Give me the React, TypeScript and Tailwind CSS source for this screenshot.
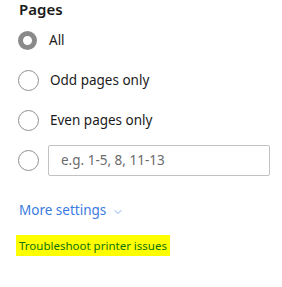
import { ChevronDown } from 'lucide-react';

const font = { fontFamily: '"Segoe UI", "Noto Sans", "Open Sans", sans-serif' };

function Radio({ checked }: { checked?: boolean }) {
  return checked ? (
    <span className="w-[19px] h-[19px] rounded-full border-[5px] border-[#8a8a8a] bg-white shrink-0" />
  ) : (
    <span className="w-[21px] h-[21px] rounded-full border border-[#8f8f8f] bg-white shrink-0" />
  );
}

export default function App() {
  const options = ['All', 'Odd pages only', 'Even pages only'];
  return (
    <div className="w-[282px] h-[287px] bg-white text-[#1b1b1b]" style={font}>
      <div className="pl-[19px] pr-[12px]">
        <div className="text-[15px] font-semibold leading-[18px]">Pages</div>
        <div className="mt-[2px]">
          {options.map((o, i) => (
            <div key={o} className="h-[40px] flex items-center gap-[11px] -ml-[1px]">
              <Radio checked={i === 0} />
              <span className={`text-[13.5px] ${i === 0 ? 'ml-[1px]' : ''}`}>{o}</span>
            </div>
          ))}
          <div className="h-[40px] flex items-center gap-[9px] -ml-[1px]">
            <Radio />
            <div className="flex-1 h-[31px] border border-[#c2c2c2] rounded-[2px] flex items-center px-[12px] text-[13.5px] text-[#6b6b6b]">
              e.g. 1-5, 8, 11-13
            </div>
          </div>
        </div>
        <div className="mt-[21px] flex items-center gap-[6px] text-[13.5px] text-[#3a7be0] leading-[18px]">
          More settings
          <ChevronDown size={12} strokeWidth={1.5} className="mt-[3px] text-[#5a94e6]" />
        </div>
      </div>
      <div className="mt-[16px] ml-[16px] w-[154px] h-[21px] bg-[#ffff00] flex items-center pl-[3px] text-[11.5px] text-[#0f720f] whitespace-nowrap">
        Troubleshoot printer issues
      </div>
    </div>
  );
}
